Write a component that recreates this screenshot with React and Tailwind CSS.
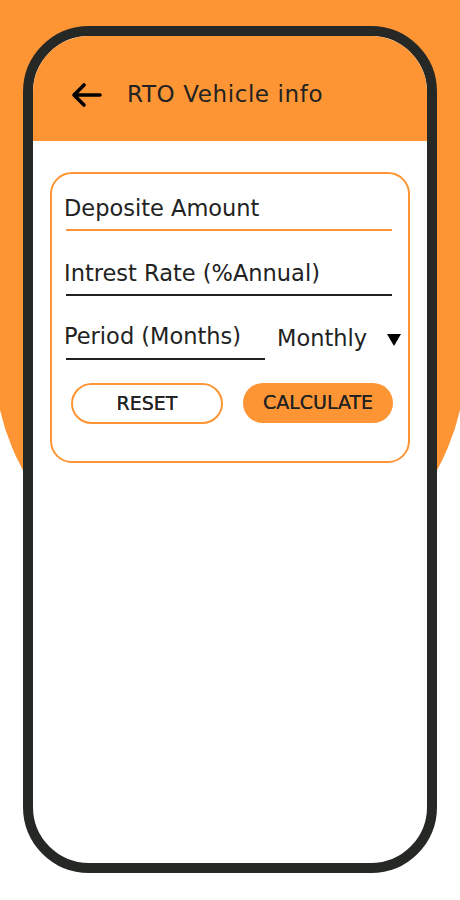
import React from "react";

export default function App() {
  const font = { fontFamily: "'DejaVu Sans', 'Noto Sans', sans-serif" };
  return (
    <div className="relative w-[460px] h-[900px] overflow-hidden bg-white" style={font}>
      <div className="absolute top-0 left-[-6px] w-[472px] h-[593px] bg-[#fe9535] rounded-b-[236px]" />
      <div className="relative pt-[26px] pl-[23px]">
        <div className="w-[414px] h-[847px] border-[10px] border-[#262826] rounded-[66px] bg-white overflow-hidden flex flex-col">
          <div className="h-[105px] bg-[#fe9535] flex items-center pl-[38px] pt-[12px]">
            <svg width="32" height="28" viewBox="0 0 32 28" fill="none" stroke="#000" strokeWidth="3.6" strokeLinecap="round" strokeLinejoin="round">
              <path d="M29 14H4M13 4L3 14l10 10" />
            </svg>
            <span className="ml-[24px] text-[23px] tracking-[0.6px] text-[#222]">RTO Vehicle info</span>
          </div>
          <div className="px-[17px] pt-[31px]">
            <div className="border-2 border-[#fe9535] rounded-[22px] h-[291px] px-[12px] pt-[20px]">
              <div className="text-[22.5px] text-[#222] leading-[28px]">Deposite Amount</div>
              <div className="ml-[2px] mr-[4px] mt-[7px] h-[1.5px] bg-[#fe9535]" />
              <div className="text-[22.5px] text-[#222] leading-[28px] mt-[28px]">Intrest Rate (%Annual)</div>
              <div className="ml-[2px] mr-[4px] mt-[7px] h-[2px] bg-[#222]" />
              <div className="flex items-start mt-[26px]">
                <div className="w-[201px]">
                  <div className="text-[22.5px] text-[#222] leading-[28px]">Period (Months)</div>
                  <div className="ml-[2px] mt-[8px] h-[2px] bg-[#222]" />
                </div>
                <div className="ml-[12px] pt-[2px] text-[22.5px] text-[#222] leading-[28px]">Monthly</div>
                <div className="ml-auto mr-[-5px] mt-[12px] w-0 h-0 border-l-[7px] border-r-[7px] border-t-[12px] border-l-transparent border-r-transparent border-t-black" />
              </div>
              <div className="flex mt-[23px] pl-[7px] gap-[20px]">
                <button className="w-[152px] h-[41px] rounded-full border-2 border-[#fe9535] text-[19px] text-[#222] [text-shadow:0_0_0.4px_#222]">RESET</button>
                <button className="w-[150px] h-[40px] rounded-full bg-[#fe9535] text-[19px] text-[#222] [text-shadow:0_0_0.4px_#222]">CALCULATE</button>
              </div>
            </div>
          </div>
        </div>
      </div>
    </div>
  );
}
